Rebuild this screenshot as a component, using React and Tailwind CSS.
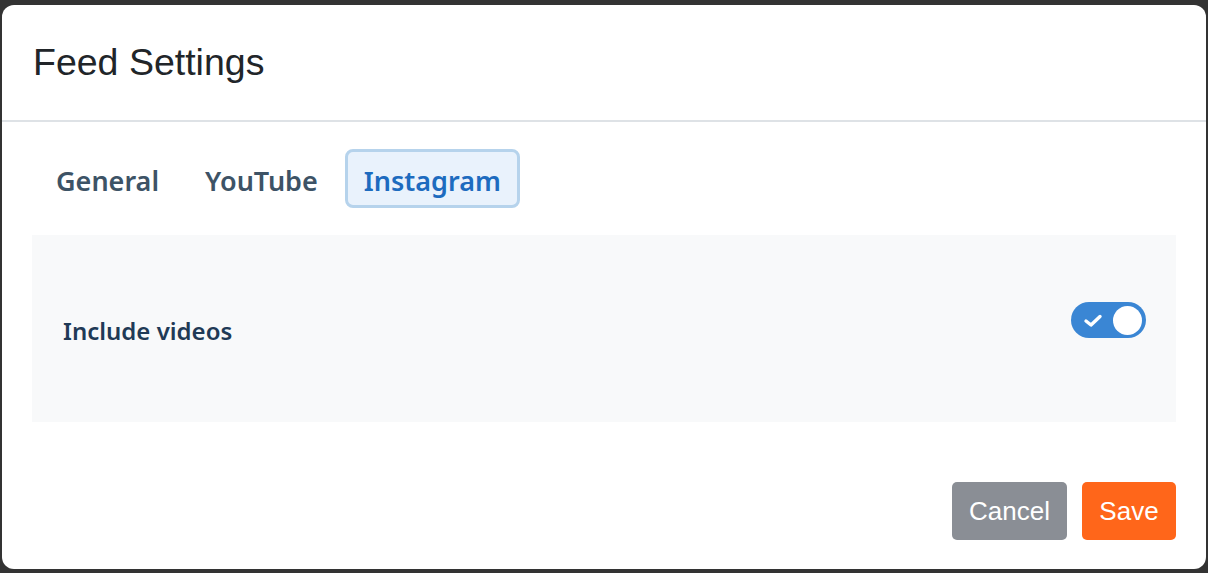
export default function App() {
  const tabs = ['General', 'YouTube', 'Instagram'];
  const active = 'Instagram';

  return (
    <div className="w-full h-[573px] bg-[#333333] pt-[5px] px-[2px] pb-[4px]">
      <div className="h-full bg-white rounded-[12px] flex flex-col overflow-hidden">
        <header className="h-[117px] px-[31px] flex items-center border-b-2 border-[#dee2e6] shrink-0">
          <h1 className="text-[37.5px] leading-none text-[#212529] font-['Liberation_Sans',Arial,sans-serif]">
            Feed Settings
          </h1>
        </header>

        <div className="px-[30px] pt-[27px] flex-1 font-['Noto_Sans','Open_Sans',sans-serif]">
          <div className="flex gap-[8px] pl-[5px]">
            {tabs.map(t => (
              <button
                key={t}
                type="button"
                className={`h-[59px] px-[16px] pt-[3px] rounded-[8px] border-[3px] text-[27px] font-semibold leading-none
                  ${t === active ? 'bg-[#e9f2fc] border-[#b6d3ec] text-[#1d6bbf]' : 'border-transparent text-[#3d5366]'}`}
              >
                {t}
              </button>
            ))}
          </div>

          <div className="mt-[27px] h-[187px] bg-[#f8f9fa] pl-[31px] pr-[30px] flex items-center justify-between">
            <span className="text-[24px] font-semibold text-[#1f3a56] mt-[4px]">Include videos</span>
            <div className="w-[75px] h-[36px] rounded-full bg-[#3a86d4] flex items-center justify-between pl-[12px] pr-[4px] mb-[17px]">
              <svg width="20" height="15" viewBox="0 0 20 15" fill="none">
                <path d="M3 8 L8 12 L17 3.5" stroke="white" strokeWidth="3.4" strokeLinecap="round" strokeLinejoin="round" />
              </svg>
              <span className="w-[29px] h-[29px] rounded-full bg-white" />
            </div>
          </div>
        </div>

        <footer className="flex justify-end gap-[15px] pr-[30px] pb-[29px] font-['Liberation_Sans',Arial,sans-serif]">
          <button type="button" className="w-[115px] h-[58px] rounded-[5px] bg-[#8a8e95] text-white text-[26px]">
            Cancel
          </button>
          <button type="button" className="w-[94px] h-[58px] rounded-[5px] bg-[#ff661a] text-white text-[26px]">
            Save
          </button>
        </footer>
      </div>
    </div>
  );
}
